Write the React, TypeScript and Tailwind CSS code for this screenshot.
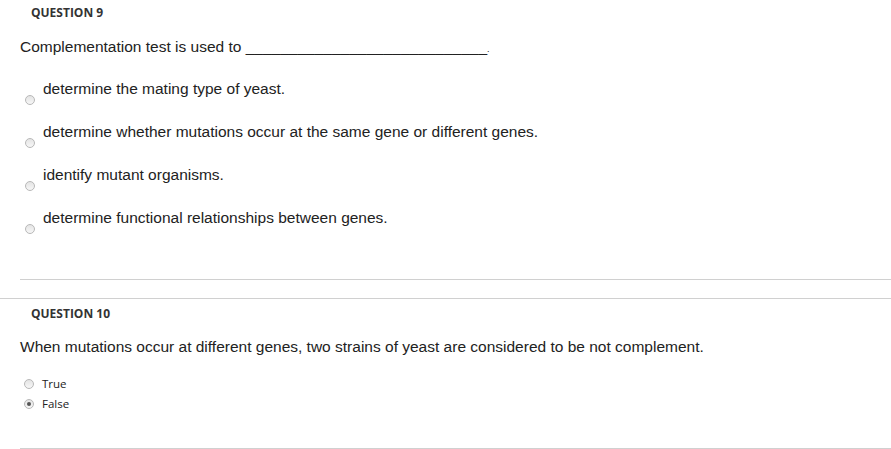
import React from 'react';

const arial = { fontFamily: '"Liberation Sans", Arial, sans-serif' };
const open = { fontFamily: '"Open Sans", "Segoe UI", sans-serif' };

const Radio: React.FC<{ checked?: boolean; className?: string }> = ({ checked, className }) => (
  <div
    className={`w-[10px] h-[10px] rounded-full border border-[#b8b8b8] bg-gradient-to-b from-[#e4e4e4] to-[#f7f7f7] flex items-center justify-center shrink-0 ${className ?? ''}`}
  >
    {checked && <div className="w-[4px] h-[4px] rounded-full bg-[#555]" />}
  </div>
);

const options9 = [
  'determine the mating type of yeast.',
  'determine whether mutations occur at the same gene or different genes.',
  'identify mutant organisms.',
  'determine functional relationships between genes.',
];

const App: React.FC = () => {
  return (
    <div className="w-[891px] h-[449px] bg-white overflow-hidden text-[#222]">
      {/* Question 9 */}
      <div className="pl-[31px] pt-[5px] h-[21px] text-[12px] leading-[16px] font-bold text-[#333]" style={open}>
        QUESTION 9
      </div>
      <div className="pl-[20px] mt-[17px] text-[15.5px] leading-[18px]" style={arial}>
        Complementation test is used to ____________________________<span className="text-[9px]">.</span>
      </div>

      <div className="mt-[22px]">
        {options9.map((o) => (
          <div key={o} className="flex h-[43px] pl-[25px]">
            <Radio className="mt-[15px]" />
            <div className="ml-[8px] text-[15.5px] leading-[18px]" style={arial}>
              {o}
            </div>
          </div>
        ))}
      </div>

      <div className="ml-[20px] mt-[27px] border-t border-[#d0d0d0]" />
      <div className="mt-[18px] border-t border-[#d0d0d0]" />

      {/* Question 10 */}
      <div className="pl-[31px] mt-[7px] text-[12px] leading-[16px] font-bold text-[#333]" style={open}>
        QUESTION 10
      </div>
      <div className="pl-[20px] mt-[16px] text-[15.5px] leading-[18px]" style={arial}>
        When mutations occur at different genes, two strains of yeast are considered to be not complement.
      </div>

      <div className="mt-[20px] pl-[24px] flex flex-col gap-[5px]">
        <div className="flex items-center h-[15px]">
          <Radio />
          <span className="ml-[8px] text-[11.5px] leading-[15px] text-[#222]" style={open}>True</span>
        </div>
        <div className="flex items-center h-[15px]">
          <Radio checked />
          <span className="ml-[8px] text-[11.5px] leading-[15px] text-[#222]" style={open}>False</span>
        </div>
      </div>

      <div className="ml-[20px] mt-[37px] border-t border-[#d0d0d0]" />
    </div>
  );
};

export default App;
